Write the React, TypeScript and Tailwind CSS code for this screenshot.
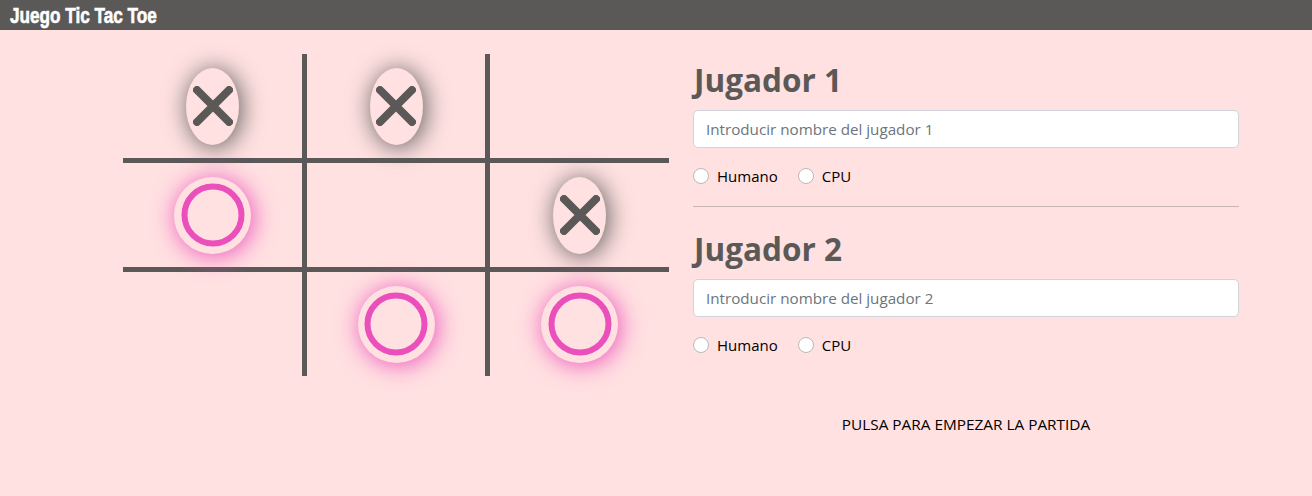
const Cross = () => (
	<div className="flex h-[77px] w-[53px] items-center justify-center rounded-[50%] shadow-[2px_2px_25px_#5a5958]">
		<svg width="40" height="40" viewBox="0 0 40 40" fill="none" stroke="#5a5958" strokeWidth="8" strokeLinecap="round">
			<path d="M4 4 L36 36 M36 4 L4 36" />
		</svg>
	</div>
);

const Nought = () => (
	<div className="flex size-[77px] items-center justify-center rounded-full shadow-[2px_2px_25px_#ec4fbc]">
		<svg width="64" height="64" viewBox="0 0 64 64" fill="none" stroke="#ea4fbb" strokeWidth="6">
			<circle cx="32" cy="32" r="28.5" />
		</svg>
	</div>
);

const cells = [
	{ mark: "x", border: "border-r-[5px] border-b-[5px]" },
	{ mark: "x", border: "border-r-[5px] border-b-[5px]" },
	{ mark: "", border: "border-b-[5px]" },
	{ mark: "o", border: "border-r-[5px] border-b-[5px]" },
	{ mark: "", border: "border-r-[5px] border-b-[5px]" },
	{ mark: "x", border: "border-b-[5px]" },
	{ mark: "", border: "border-r-[5px]" },
	{ mark: "o", border: "border-r-[5px]" },
	{ mark: "o", border: "" },
];

const Player = ({ n }: { n: number }) => (
	<section>
		<h2 className="ml-px text-[31.5px] leading-[38px] font-bold text-[#5a5958]">Jugador {n}</h2>
		<input
			type="text"
			placeholder={`Introducir nombre del jugador ${n}`}
			className="mt-[11px] block h-[38px] w-full rounded-[5px] border border-[#ced4da] bg-white px-3 text-[15.2px] placeholder:text-[#6c757d] outline-none"
		/>
		<div className="mt-[18px] flex h-[20px] items-center text-[15px] text-black">
			<label className="flex items-center gap-2">
				<input type="radio" name={`tipo${n}`} className="size-4 appearance-none rounded-full border border-[#b9b9b9] bg-white" />
				Humano
			</label>
			<label className="ml-5 flex items-center gap-2">
				<input type="radio" name={`tipo${n}`} className="size-4 appearance-none rounded-full border border-[#b9b9b9] bg-white" />
				CPU
			</label>
		</div>
	</section>
);

const App = () => {
	return (
		<div className="min-h-screen bg-[#ffe1e1] font-['Open_Sans',sans-serif]">
			<header className="flex h-[30px] items-center bg-[#5a5958] px-[10px]">
				<h1 className="origin-left scale-x-[0.78] font-['Liberation_Sans',sans-serif] text-[22px] font-bold whitespace-nowrap text-white [-webkit-text-stroke:0.6px_white]">
					Juego Tic Tac Toe
				</h1>
			</header>
			<main className="flex gap-6 pt-6 pl-[123px]">
				<div className="grid h-[322px] w-[546px] grid-cols-[184px_183px_179px] grid-rows-[109px_109px_104px]">
					{cells.map((cell, i) => (
						<div key={i} className={`flex items-center justify-center border-[#5a5958] ${cell.border}`}>
							{cell.mark === "x" && <Cross />}
							{cell.mark === "o" && <Nought />}
						</div>
					))}
				</div>
				<div className="w-[546px] pt-[7px]">
					<Player n={1} />
					<hr className="mt-[20px] mb-[23px] border-[#c9b4b4]" />
					<Player n={2} />
					<p className="mt-[58px] text-center text-[15.35px] text-black">PULSA PARA EMPEZAR LA PARTIDA</p>
				</div>
			</main>
		</div>
	);
};

export default App;
